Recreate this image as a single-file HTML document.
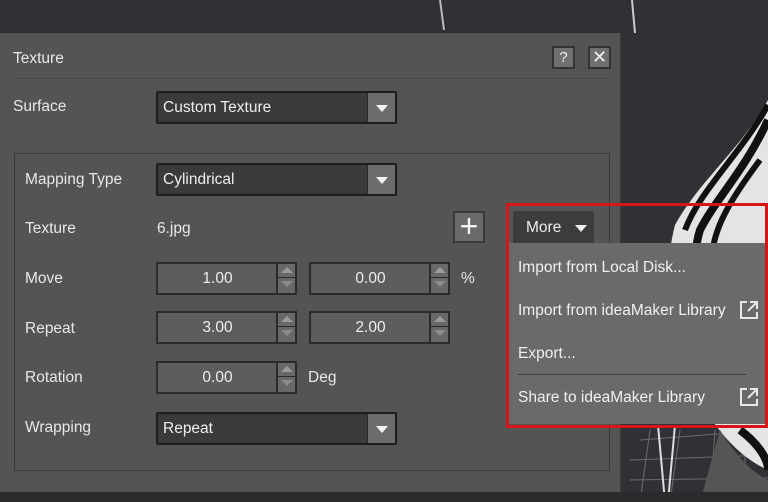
<!DOCTYPE html>
<html><head><meta charset="utf-8"><style>
*{margin:0;padding:0;box-sizing:border-box}
body{width:768px;height:502px;overflow:hidden;background:#2f3134;font-family:"Liberation Sans",sans-serif;font-size:15px;color:#e6e6e6;position:relative}
.a{position:absolute}
.dlg{left:0;top:33px;width:621px;height:462px;background:#545454;border-right:1px solid #3c3c3c}
.dd{position:absolute;height:33px;width:241px;background:#3a3a3a;border:2px solid #1e1e1e;border-radius:2px}
.dd span{position:absolute;left:5px;top:6px;font-size:15.5px;color:#eee}
.dd i{position:absolute;right:0;top:0;width:28px;height:29px;background:#6c6c6c;border-left:1px solid #2a2a2a}
.dd i:after{content:"";position:absolute;left:8px;top:12px;border-left:6px solid transparent;border-right:6px solid transparent;border-top:7px solid #f2f2f2}
.sp{position:absolute;width:141px;height:33px}
.sp .f{position:absolute;left:0;top:0;width:121px;height:33px;background:#5d5d5d;border:2px solid #2b2b2b;border-right:none;text-align:center;padding-top:6px;color:#eee;font-size:15.5px}
.sp .u,.sp .d{position:absolute;left:120px;width:21px;height:16px;background:#686868;border:2px solid #2b2b2b}
.sp .u{top:0;border-bottom:1px solid #2b2b2b}.sp .d{top:16px;height:17px;border-top:none}
.sp .u:after{content:"";position:absolute;left:3px;top:3px;border-left:6px solid transparent;border-right:6px solid transparent;border-bottom:6px solid #9a9a9a}
.sp .d:after{content:"";position:absolute;left:3px;top:3px;border-left:6px solid transparent;border-right:6px solid transparent;border-top:6px solid #8a8a8a}
.lbl{position:absolute;color:#e8e8e8;font-size:15.5px}
.mi{position:absolute;left:518px;color:#f0f0f0;font-size:15.5px}
.btn{position:absolute;top:46px;width:23px;height:23px;background:#707070;border:2px solid #333;color:#f0f0f0;text-align:center}
</style></head><body>
<svg class="a" style="left:0;top:0" width="768" height="502">
<line x1="440" y1="0" x2="444" y2="30" stroke="#bbb" stroke-width="2"/>
<line x1="632" y1="0" x2="635" y2="33" stroke="#ccc" stroke-width="2"/>
<g stroke="#6a6c70" stroke-width="1">
<line x1="640" y1="440" x2="768" y2="430"/><line x1="630" y1="460" x2="768" y2="455"/><line x1="630" y1="480" x2="768" y2="478"/>
<line x1="650" y1="430" x2="640" y2="502"/><line x1="680" y1="430" x2="670" y2="502"/><line x1="715" y1="430" x2="710" y2="502"/><line x1="745" y1="430" x2="745" y2="502"/>
</g>
<line x1="658" y1="425" x2="665" y2="502" stroke="#ddd" stroke-width="2"/>
<line x1="675" y1="425" x2="668" y2="502" stroke="#ddd" stroke-width="2"/>
<path d="M768 100 C740 150 700 180 675 225 C650 320 700 440 768 470 Z" fill="#e4e4e4"/>
<path d="M768 105 C740 155 700 190 685 230" stroke="#111" stroke-width="6" fill="none"/>
<path d="M768 120 C745 170 715 200 700 230 C690 260 700 300 720 330" stroke="#111" stroke-width="8" fill="none"/>
<path d="M760 160 C730 200 712 230 712 260" stroke="#111" stroke-width="6" fill="none"/>
<path d="M740 430 C760 445 768 460 768 470" stroke="#111" stroke-width="8" fill="none"/>
<path d="M720 430 Q745 470 768 480 L768 502 L700 502 Z" fill="#555"/>
</svg>
<div class="a dlg"></div>
<div class="a" style="left:0;top:492px;width:768px;height:10px;background:#2a2b2d"></div>
<div class="lbl" style="left:13px;top:50px">Texture</div>
<div class="btn" style="left:552px;font-size:15px;line-height:19px">?</div>
<div class="btn" style="left:588px;font-size:18px;line-height:19px">✕</div>
<div class="a" style="left:13px;top:78px;width:598px;height:1px;background:#4a4a4a"></div>
<div class="lbl" style="left:13px;top:98px">Surface</div>
<div class="dd" style="left:156px;top:91px"><span>Custom Texture</span><i></i></div>
<div class="a" style="left:14px;top:153px;width:596px;height:318px;border:1px solid #3a3a3a"></div>
<div class="lbl" style="left:25px;top:171px">Mapping Type</div>
<div class="dd" style="left:156px;top:163px"><span>Cylindrical</span><i></i></div>
<div class="lbl" style="left:25px;top:220px">Texture</div>
<div class="lbl" style="left:157px;top:220px">6.jpg</div>
<div class="a" style="left:453px;top:211px;width:32px;height:32px;background:#6a6a6a;border:2px solid #3a3a3a;color:#f4f4f4;font-size:32px;line-height:26px;text-align:center">+</div>
<div class="lbl" style="left:25px;top:270px">Move</div>
<div class="sp" style="left:156px;top:262px"><div class="f">1.00</div><div class="u"></div><div class="d"></div></div>
<div class="sp" style="left:309px;top:262px"><div class="f">0.00</div><div class="u"></div><div class="d"></div></div>
<div class="lbl" style="left:461px;top:270px">%</div>
<div class="lbl" style="left:25px;top:320px">Repeat</div>
<div class="sp" style="left:156px;top:311px"><div class="f">3.00</div><div class="u"></div><div class="d"></div></div>
<div class="sp" style="left:309px;top:311px"><div class="f">2.00</div><div class="u"></div><div class="d"></div></div>
<div class="lbl" style="left:25px;top:369px">Rotation</div>
<div class="sp" style="left:156px;top:361px"><div class="f">0.00</div><div class="u"></div><div class="d"></div></div>
<div class="lbl" style="left:308px;top:369px">Deg</div>
<div class="lbl" style="left:25px;top:419px">Wrapping</div>
<div class="dd" style="left:156px;top:412px"><span>Repeat</span><i></i></div>
<div class="a" style="left:508px;top:243px;width:258px;height:181px;background:#6a6a6a"></div>
<div class="a" style="left:513px;top:211px;width:81px;height:32px;background:#3c3c3c;border-radius:2px 2px 0 0;color:#eee;padding:8px 0 0 13px;font-size:15.5px">More<span style="position:absolute;left:62px;top:14px;border-left:6px solid transparent;border-right:6px solid transparent;border-top:7px solid #eee"></span></div>
<div class="mi" style="top:259px">Import from Local Disk...</div>
<div class="mi" style="top:302px">Import from ideaMaker Library</div>
<div class="mi" style="top:345px">Export...</div>
<div class="a" style="left:518px;top:374px;width:228px;height:1px;background:#3e3e3e"></div>
<div class="mi" style="top:389px">Share to ideaMaker Library</div>
<svg class="a" style="left:738px;top:299px" width="22" height="22"><path d="M9 3H3v16h16v-6M12 3h7v7M19 3l-9 9" stroke="#e8e8e8" stroke-width="2" fill="none"/></svg>
<svg class="a" style="left:738px;top:386px" width="22" height="22"><path d="M9 3H3v16h16v-6M12 3h7v7M19 3l-9 9" stroke="#e8e8e8" stroke-width="2" fill="none"/></svg>
<div class="a" style="left:506px;top:203px;width:262px;height:225px;border:3px solid #d8141b"></div>
</body></html>
